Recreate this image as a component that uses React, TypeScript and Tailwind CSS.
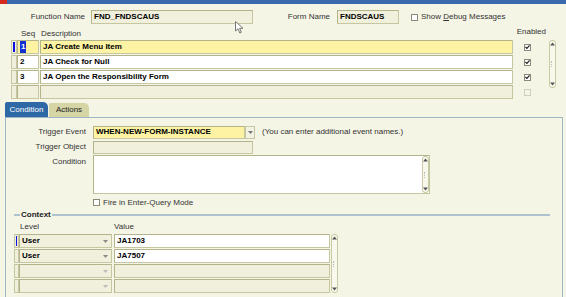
import React from "react";

const font = { fontFamily: '"Liberation Sans", Arial, sans-serif' };

const Check = ({ on }: { on: boolean }) => (
  <div className="w-[7px] h-[7px] border border-[#8a8a78] bg-white flex items-center justify-center">
    {on && (
      <svg width="6" height="6" viewBox="0 0 6 6">
        <path d="M0.5 3 L2.3 4.8 L5.5 1" stroke="#222" strokeWidth="1.4" fill="none" />
      </svg>
    )}
  </div>
);

const ScrollBar = ({ h }: { h: string }) => (
  <div className={`w-[7px] ${h} border border-[#c9c9a3] rounded-[3px] bg-[#f8f8ec] flex flex-col justify-between items-center py-[1px]`}>
    <svg width="5" height="4" viewBox="0 0 5 4">
      <path d="M0 3.5 L2.5 0.5 L5 3.5Z" fill="#555" />
    </svg>
    <div className="w-[3px] h-[6px] border-l border-dotted border-[#bbb]" />
    <svg width="5" height="4" viewBox="0 0 5 4">
      <path d="M0 0.5 L2.5 3.5 L5 0.5Z" fill="#555" />
    </svg>
  </div>
);

const Field = ({ className, children }: { className: string; children?: React.ReactNode }) => (
  <div className={`border border-[#c6c6a0] border-t-[#b3b38c] border-l-[#b3b38c] flex items-center pl-[2px] text-[8px] font-bold text-black ${className}`}>
    {children}
  </div>
);

const rows = [
  { seq: "1", desc: "JA Create Menu Item", on: true, cur: true },
  { seq: "2", desc: "JA Check for Null", on: true, cur: false },
  { seq: "3", desc: "JA Open the Responsibility Form", on: true, cur: false },
  { seq: "", desc: "", on: false, cur: false, empty: true },
];

const ctx = [
  { level: "User", value: "JA1703", cur: true },
  { level: "User", value: "JA7507", cur: false },
  { level: "", value: "", cur: false, empty: true },
  { level: "", value: "", cur: false, empty: true },
];

export default function App() {
  return (
    <div className="w-[566px] h-[297px] overflow-hidden bg-[#f5f5e6] relative text-[#333] text-[8px]" style={font}>
      <div className="h-[4px] bg-[#3c68ae] flex">
        <div className="w-[7px] bg-[#d42a1e]" />
      </div>

      <div className="mt-[6px] h-[14px] flex items-center">
        <div className="w-[85px] text-right">Function Name</div>
        <Field className="ml-[6px] w-[162px] h-[14px] bg-[#f0f0dd]">FND_FNDSCAUS</Field>
        <div className="w-[77px] text-right">Form Name</div>
        <Field className="ml-[7px] w-[62px] h-[14px] bg-[#f0f0dd]">FNDSCAUS</Field>
        <div className="ml-[12px] flex items-center gap-[3px]">
          <Check on={false} />
          <span>
            Show <u>D</u>ebug Messages
          </span>
        </div>
      </div>

      <div className="mt-[4px] h-[12px] flex items-end leading-[12px]">
        <div className="ml-[21px] w-[20px]">Seq</div>
        <div>Description</div>
        <div className="ml-auto mr-[20px] mb-[2px]">Enabled</div>
      </div>

      <div className="flex">
        <div className="ml-[11px] flex flex-col gap-[1px]">
          {rows.map((r, i) => (
            <div key={i} className="flex h-[14px]">
              <div className="w-[6px] h-[14px] border border-[#c6c6a0] bg-[#efefdc] flex p-[1px]">
                {r.cur && <div className="w-full bg-[#1010e0]" />}
              </div>
              <Field
                className={`w-[22px] h-[14px] ${r.cur ? "bg-[#fdf3a3]" : r.empty ? "bg-[#f0f0dd]" : "bg-white"}`}
              >
                {r.cur ? <span className="bg-[#1030d0] text-white px-[1px]">{r.seq}</span> : r.seq}
              </Field>
              <Field
                className={`ml-[1px] w-[473px] h-[14px] ${r.cur ? "bg-[#fdf3a3]" : r.empty ? "bg-[#f0f0dd]" : "bg-white"}`}
              >
                {r.desc}
              </Field>
              <div className="w-[32px] pl-[11px] flex items-center">
                {r.empty ? (
                  <div className="w-[7px] h-[7px] border border-[#cfcfc0] bg-[#f5f5e6]" />
                ) : (
                  <Check on={r.on} />
                )}
              </div>
            </div>
          ))}
        </div>
        <div className="ml-[4px]">
          <ScrollBar h="h-[48px]" />
        </div>
      </div>

      <div className="mt-[3px] ml-[5px] flex items-end">
        <div className="w-[43px] h-[15px] bg-[#2f68a6] text-white rounded-tr-[5px] rounded-tl-[2px] flex items-center justify-center">
          Condition
        </div>
        <div className="ml-[1px] w-[40px] h-[14px] bg-[#d5d5a6] text-[#222] rounded-tr-[5px] rounded-tl-[2px] flex items-center justify-center">
          Actions
        </div>
      </div>

      <div className="ml-[5px] w-[558px] h-[190px] border-l border-t border-r border-[#9db7c6]">
        <div className="mt-[8px] flex items-center h-[12px]">
          <div className="w-[80px] text-right">Trigger Event</div>
          <Field className="ml-[7px] w-[152px] h-[13px] bg-[#fdf3a3]">WHEN-NEW-FORM-INSTANCE</Field>
          <div className="w-[10px] h-[13px] border border-[#c6c6a0] bg-[#f3f3e4] flex items-center justify-center">
            <svg width="5" height="3" viewBox="0 0 5 3">
              <path d="M0 0 L2.5 3 L5 0Z" fill="#777" />
            </svg>
          </div>
          <div className="ml-[7px]">(You can enter additional event names.)</div>
        </div>

        <div className="mt-[3px] flex items-center h-[12px]">
          <div className="w-[80px] text-right">Trigger Object</div>
          <Field className="ml-[7px] w-[160px] h-[13px] bg-[#f0f0dd]" />
        </div>

        <div className="mt-[2px] flex h-[39px]">
          <div className="w-[80px] text-right leading-[12px] pt-[1px]">Condition</div>
          <div className="ml-[7px] w-[337px] h-[39px] border border-[#c6c6a0] border-t-[#b3b38c] border-l-[#b3b38c] bg-white flex justify-end">
            <ScrollBar h="h-[37px]" />
          </div>
        </div>

        <div className="mt-[4px] ml-[87px] flex items-center gap-[3px] h-[9px]">
          <Check on={false} />
          <span>Fire in Enter-Query Mode</span>
        </div>

        <div className="mt-[2px] ml-[8px] w-[536px] h-[12px] flex items-center">
          <div className="w-[6px] h-[2px] bg-[#aec3cf]" />
          <div className="font-bold text-[#222] px-[1px]">Context</div>
          <div className="flex-1 h-[2px] bg-[#aec3cf]" />
        </div>

        <div className="h-[11px] flex items-end leading-[11px]">
          <div className="ml-[14px] w-[94px]">Level</div>
          <div>Value</div>
        </div>

        <div className="mt-[2px] ml-[8px] flex">
          <div className="flex flex-col gap-[1px]">
            {ctx.map((c, i) => (
              <div key={i} className="flex h-[14px]">
                <div className="w-[5px] h-[14px] border border-[#c6c6a0] bg-[#efefdc] flex p-[1px]">
                  {c.cur && <div className="w-full bg-[#1010e0]" />}
                </div>
                <Field className="w-[93px] h-[14px] bg-[#f0f0dd] justify-between pr-[3px]">
                  <span>{c.level}</span>
                  <svg width="5" height="3" viewBox="0 0 5 3">
                    <path d="M0 0 L2.5 3 L5 0Z" fill={c.empty ? "#bbb" : "#888"} />
                  </svg>
                </Field>
                <Field className={`ml-[2px] w-[216px] h-[14px] ${c.empty ? "bg-[#f0f0dd]" : "bg-white"}`}>
                  {c.value}
                </Field>
              </div>
            ))}
          </div>
          <div className="ml-[1px]">
            <ScrollBar h="h-[59px]" />
          </div>
        </div>
      </div>

      <svg className="absolute left-[235px] top-[21px]" width="9" height="13" viewBox="0 0 9 13">
        <path d="M0.5 0.5 L0.5 10 L3 7.8 L4.8 12 L6.3 11.3 L4.6 7.3 L8 7.3 Z" fill="#fff" stroke="#777" strokeWidth="1" />
      </svg>
    </div>
  );
}
